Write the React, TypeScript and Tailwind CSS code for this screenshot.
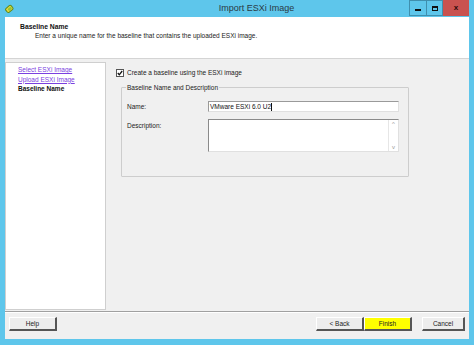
import React from "react";

const F = { fontFamily: '"Liberation Sans", Arial, sans-serif' } as React.CSSProperties;

function Btn({ label, yellow, w }: { label: string; yellow?: boolean; w: string }) {
  return (
    <div
      className={`${w} h-[14px] flex items-center justify-center text-[6.5px] text-[#222] border-t border-l border-t-[#ffffff] border-l-[#ffffff] border-b-[2px] border-r-[2px] border-b-[#555] border-r-[#555] ${
        yellow ? "bg-[#ffff00] border-t-[#333] border-l-[#333] border-t-[1px] border-l-[1px]" : "bg-[#ededed]"
      }`}
    >
      {label}
    </div>
  );
}

export default function App() {
  return (
    <div className="w-[474px] h-[345px] bg-[#5ec6eb] flex flex-col overflow-hidden" style={F}>
      {/* title bar */}
      <div className="h-[17px] flex items-start shrink-0">
        <div className="w-[100px] h-[17px] flex items-center pl-[5px]">
          <svg width="10" height="10" viewBox="0 0 10 10">
            <rect x="1" y="2" width="7" height="5" rx="1.5" transform="rotate(-40 5 5)" fill="#e8d83a" stroke="#5c8a1e" strokeWidth="1" />
            <rect x="3" y="3.5" width="4" height="2.5" rx="1" transform="rotate(-40 5 5)" fill="#8cc63f" />
          </svg>
        </div>
        <div className="flex-1 h-[17px] flex items-center justify-center text-[9px] text-[#2a3a44] pl-[4px]">Import ESXi Image</div>
        <div className="flex h-[16px] mr-[5px]">
          <div className="w-[17px] h-[16px] border border-[#3f8fae] border-r-0 flex items-end justify-center pb-[4px]">
            <div className="w-[6px] h-[2px] bg-[#111]" />
          </div>
          <div className="w-[17px] h-[16px] border border-[#3f8fae] flex items-center justify-center">
            <div className="w-[6px] h-[5px] border-[1.5px] border-[#111] border-t-[2px]" />
          </div>
          <div className="w-[26px] h-[16px] bg-[#c9524f] flex items-center justify-center text-[8px] font-bold text-[#2a0a0a]">x</div>
        </div>
      </div>
      {/* body */}
      <div className="flex-1 mx-[5px] mb-[6px] bg-[#f0f0f0] flex flex-col">
        <div className="h-[42px] bg-white border-b border-[#d4d4d4] shrink-0 pt-[5px] pl-[15px]">
          <div className="text-[6.8px] font-bold text-[#111] leading-[9px]">Baseline Name</div>
          <div className="text-[6.5px] text-[#222] leading-[9px] pl-[15px]">
            Enter a unique name for the baseline that contains the uploaded ESXi image.
          </div>
        </div>
        <div className="flex-1 flex pt-[3px]">
          <div className="w-[101px] bg-white border border-[#cfcfcf] mb-[1px] pl-[12px] pt-[2px] text-[6.5px] leading-[9.5px]">
            <div className="text-[#7b3fe0] underline">Select ESXi Image</div>
            <div className="text-[#7b3fe0] underline">Upload ESXi Image</div>
            <div className="font-bold text-[#111]">Baseline Name</div>
          </div>
          <div className="flex-1 pl-[10px] pt-[6px] text-[6.5px] text-[#222]">
            <div className="flex items-center gap-[3px] h-[9px]">
              <div className="w-[8px] h-[8px] bg-white border border-[#555] flex items-center justify-center text-[7px] leading-none text-[#111]">
                <svg width="6" height="6" viewBox="0 0 6 6">
                  <path d="M0.8 3 L2.3 4.8 L5.2 1" stroke="#111" strokeWidth="1.3" fill="none" />
                </svg>
              </div>
              <span>Create a baseline using the ESXi image</span>
            </div>
            <div className="relative mt-[10px] ml-[5px] w-[288px] h-[90px] border border-[#cdcdcd] rounded-[1px]">
              <div className="absolute -top-[5px] left-[4px] bg-[#f0f0f0] px-[1px] leading-[9px]">Baseline Name and Description</div>
              <div className="pt-[13px] pl-[5px] flex">
                <div className="w-[81px] leading-[11px]">Name:</div>
                <div className="w-[191px] h-[11px] bg-white border border-[#9a9a9a] border-r-[#e0e0e0] border-b-[#e0e0e0] leading-[9px] pl-[1px] text-[#111]">
                  VMware ESXi 6.0 U2<span className="inline-block w-[0.5px] h-[8px] bg-[#111] align-middle" />
                </div>
              </div>
              <div className="pt-[7px] pl-[5px] flex">
                <div className="w-[81px] leading-[11px] pt-[1px]">Description:</div>
                <div className="w-[191px] h-[33px] bg-white border border-[#8a8a8a] border-r-[#e0e0e0] border-b-[#e0e0e0] flex justify-end">
                  <div className="w-[10px] h-full border-l border-[#e6e6e6] flex flex-col justify-between items-center text-[6px] text-[#9a9a9a] leading-[8px]">
                    <span>^</span>
                    <span>v</span>
                  </div>
                </div>
              </div>
            </div>
          </div>
        </div>
        <div className="h-[1px] bg-[#a0a0a0] shrink-0" />
        <div className="h-[1px] bg-white shrink-0" />
        <div className="h-[26px] shrink-0 flex items-start pt-[4px] pl-[4px] pr-[4px]">
          <Btn label="Help" w="w-[48px]" />
          <div className="flex-1" />
          <Btn label="< Back" w="w-[48px]" />
          <Btn label="Finish" w="w-[48px]" yellow />
          <div className="w-[10px]" />
          <Btn label="Cancel" w="w-[43px]" />
        </div>
      </div>
    </div>
  );
}
